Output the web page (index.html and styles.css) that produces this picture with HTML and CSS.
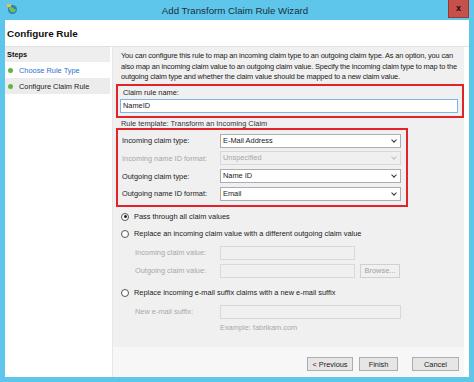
FILE: index.html
```html
<!DOCTYPE html>
<html>
<head>
<meta charset="utf-8">
<link rel="stylesheet" href="styles.css">
</head>
<body>
<div class="window">
  <div class="titlebar">
    <svg class="appicon" width="12" height="12" viewBox="0 0 12 12">
      <circle cx="6.5" cy="6.5" r="4.5" fill="#2f7fc4"/>
      <path d="M3 5 Q5 3 7 5 T10 6 L9 9 Q6 10 4 8 Z" fill="#7cc242"/>
      <rect x="1" y="1" width="4" height="3" fill="#e8c34a"/>
    </svg>
    <div class="title">Add Transform Claim Rule Wizard</div>
    <div class="close">x</div>
  </div>
  <div class="client">
    <div class="header">Configure Rule</div>
    <div class="body">
      <div class="steps">
        <div class="steps-head">Steps</div>
        <div class="step"><span class="dot"></span><span class="link">Choose Rule Type</span></div>
        <div class="step current"><span class="dot"></span><span>Configure Claim Rule</span></div>
      </div>
      <div class="main">
        <div class="content">
          <p class="intro">You can configure this rule to map an incoming claim type to an outgoing claim type. As an option, you can also map an incoming claim value to an outgoing claim value. Specify the incoming claim type to map to the outgoing claim type and whether the claim value should be mapped to a new claim value.</p>
          <div class="redbox box1">
            <div class="lbl">Claim rule name:</div>
            <div class="input name">NameID</div>
          </div>
          <div class="template">Rule template: Transform an Incoming Claim</div>
          <div class="redbox box2">
            <div class="row"><span class="rlabel">Incoming claim type:</span><div class="select">E-Mail Address<span class="chev"></span></div></div>
            <div class="row disabled"><span class="rlabel">Incoming name ID format:</span><div class="select">Unspecified<span class="chev"></span></div></div>
            <div class="row"><span class="rlabel">Outgoing claim type:</span><div class="select">Name ID<span class="chev"></span></div></div>
            <div class="row"><span class="rlabel">Outgoing name ID format:</span><div class="select">Email<span class="chev"></span></div></div>
          </div>
          <div class="radio-row r1"><span class="radio checked"></span>Pass through all claim values</div>
          <div class="radio-row r2"><span class="radio"></span>Replace an incoming claim value with a different outgoing claim value</div>
          <div class="sub disabled">
            <div class="subrow"><span class="slabel">Incoming claim value:</span><div class="input short"></div></div>
            <div class="subrow"><span class="slabel">Outgoing claim value:</span><div class="input short"></div><div class="btn browse">Browse...</div></div>
          </div>
          <div class="radio-row r3"><span class="radio"></span>Replace incoming e-mail suffix claims with a new e-mail suffix</div>
          <div class="sub disabled">
            <div class="subrow"><span class="slabel">New e-mail suffix:</span><div class="input long"></div></div>
            <div class="example">Example: fabrikam.com</div>
          </div>
        </div>
        <div class="footer">
          <div class="btn">&lt; Previous</div>
          <div class="btn finish">Finish</div>
          <div class="btn cancel">Cancel</div>
        </div>
      </div>
    </div>
  </div>
</div>
</body>
</html>
```

FILE: styles.css
```css
* { box-sizing: border-box; }
html, body { margin: 0; padding: 0; }
body {
  width: 474px;
  height: 382px;
  overflow: hidden;
  font-family: "Liberation Sans", Arial, sans-serif;
  font-size: 7.4px;
  color: #1a1a1a;
}
.window {
  width: 474px;
  height: 382px;
  background: #5ec6ea;
  display: flex;
  flex-direction: column;
  padding: 0 5px 5px 5px;
}
.titlebar {
  height: 20px;
  display: flex;
  align-items: center;
  position: relative;
}
.appicon { position: absolute; left: 1px; top: 3px; }
.title {
  flex: 1;
  text-align: center;
  font-size: 9.7px;
  color: #1d2d3a;
  padding-right: 4px;
}
.close {
  position: absolute;
  right: 0;
  top: 0;
  width: 21px;
  height: 18px;
  background: #c6504b;
  border: 1px solid #9d3531;
  border-top: none;
  color: #111;
  font-weight: bold;
  font-size: 9px;
  display: flex;
  align-items: center;
  justify-content: center;
  padding-bottom: 2px;
}
.client {
  flex: 1;
  background: #fff;
  display: flex;
  flex-direction: column;
}
.header {
  height: 27px;
  font-weight: bold;
  font-size: 9.9px;
  color: #111;
  padding: 8px 0 0 2px;
  border-bottom: 1px solid #e2e2e2;
}
.body {
  flex: 1;
  display: flex;
}
.steps {
  width: 108px;
  flex-shrink: 0;
  background: #fff;
  border-right: 1px solid #e6e6e6;
}
.steps-head {
  height: 15px;
  background: #eeeeee;
  font-weight: bold;
  padding: 3px 0 0 2px;
  margin-right: 2px;
  color: #111;
}
.step {
  height: 16px;
  display: flex;
  align-items: center;
  padding-left: 3px;
}
.step.current { background: #ececec; margin-right: 2px; }
.dot {
  width: 5px;
  height: 5px;
  border-radius: 50%;
  background: #5fb644;
  margin-right: 6px;
}
.link { color: #2f6fd0; }
.main {
  flex: 1;
  min-width: 0;
  display: flex;
  flex-direction: column;
  border-right: 5px solid #fff;
}
.content {
  flex: 1;
  background: #f0f0f0;
  padding: 4px 0 0 3px;
}
.intro {
  margin: 0 0 0 5px;
  line-height: 10.6px;
  letter-spacing: -0.13px;
  word-spacing: -0.1px;
  color: #1a1a1a;
}
.redbox {
  border: 2px solid #e2232a;
}
.box1 {
  width: 348px;
  height: 34px;
  padding: 1px 0 0 2px;
  margin-top: 1px;
}
.lbl { height: 12px; line-height: 12px; padding-left: 3px; }
.input {
  height: 14px;
  background: #fff;
  border: 1px solid #abadb3;
  line-height: 12px;
  padding-left: 2px;
}
.input.name { width: 338px; border-color: #7eb4ea; }
.template {
  padding-left: 5px;
  height: 10px;
  line-height: 12px;
  color: #333;
}
.box2 {
  width: 292px;
  height: 79px;
  padding: 4px 0 0 4px;
  display: flex;
  flex-direction: column;
  gap: 3.7px;
}
.row {
  display: flex;
  align-items: center;
  height: 14px;
}
.rlabel { width: 98px; }
.select {
  width: 181px;
  height: 14px;
  background: #fff;
  border: 1px solid #abadb3;
  position: relative;
  line-height: 12px;
  padding-left: 2px;
}
.chev {
  position: absolute;
  right: 4px;
  top: 3px;
  width: 4px;
  height: 4px;
  border-right: 1.2px solid #333;
  border-bottom: 1.2px solid #333;
  transform: rotate(45deg);
}
.row.disabled { color: #a6a6a6; }
.row.disabled .select { background: #f0f0f0; border-color: #d9d9d9; }
.row.disabled .chev { border-color: #c0c0c0; }
.radio-row {
  display: flex;
  align-items: center;
  height: 12px;
  padding-left: 5px;
}
.r1 { margin-top: 4px; }
.r2 { margin-top: 5px; }
.r3 { margin-top: 9px; }
.radio {
  width: 8px;
  height: 8px;
  border-radius: 50%;
  border: 1px solid #555;
  background: #fff;
  margin-right: 5px;
  position: relative;
}
.radio.checked::after {
  content: "";
  position: absolute;
  left: 1.5px;
  top: 1.5px;
  width: 3px;
  height: 3px;
  border-radius: 50%;
  background: #222;
}
.sub { padding-left: 19px; }
.sub.disabled { color: #a8a8a8; }
.subrow {
  display: flex;
  align-items: center;
  height: 14px;
  margin-top: 4px;
}
.subrow:first-child { margin-top: 6px; }
.slabel { width: 85px; }
.sub .input { background: #f0f0f0; border-color: #d9d9d9; }
.input.short { width: 135px; }
.input.long { width: 181px; }
.btn {
  height: 14px;
  border: 1px solid #adadad;
  background: #e6e6e6;
  display: flex;
  align-items: center;
  justify-content: center;
  color: #1a1a1a;
}
.browse {
  width: 40px;
  margin-left: 5px;
  color: #a0a0a0;
  border-color: #d0d0d0;
  background: #f0f0f0;
}
.example {
  margin-left: 85px;
  margin-top: 4px;
}
.footer {
  height: 30px;
  background: #f7f7f7;
  display: flex;
  justify-content: flex-end;
  padding: 10px 5px 0 0;
  gap: 6px;
}
.footer .btn { width: 46px; }
.footer .finish { width: 39px; }
.footer .cancel { width: 47px; margin-left: 8px; }
```
